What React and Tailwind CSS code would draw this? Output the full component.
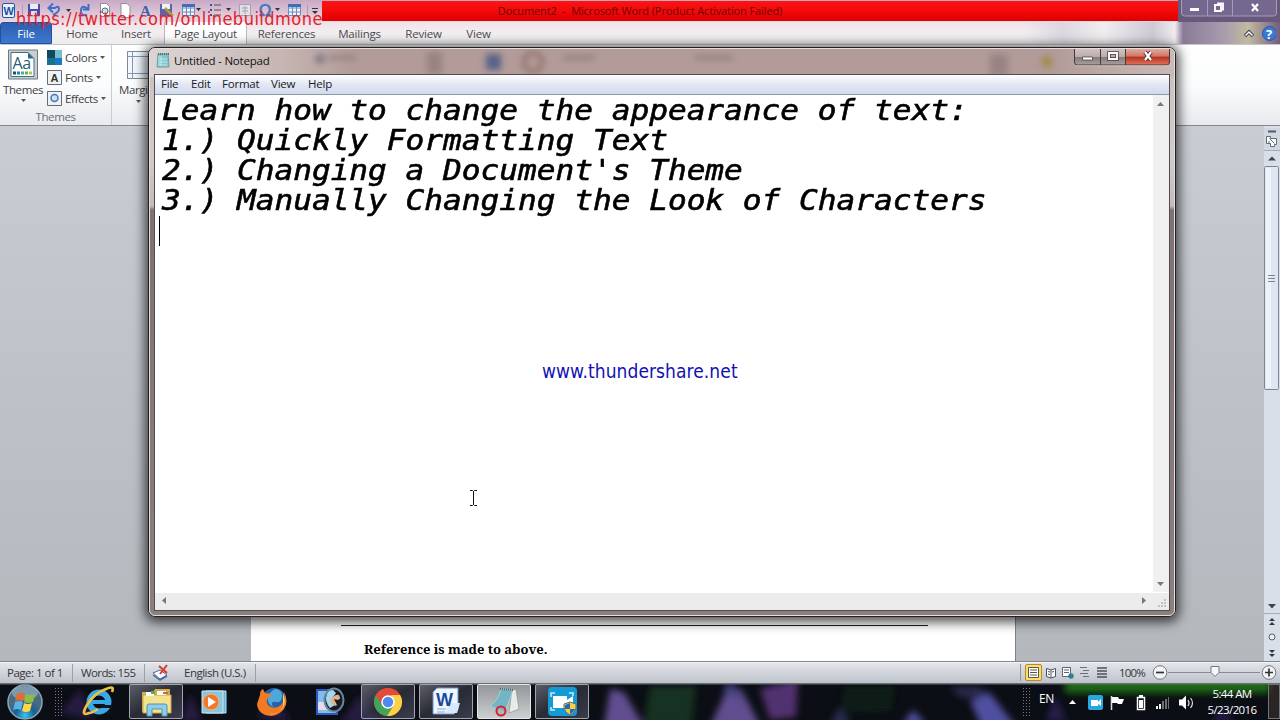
import React from "react";

const ui = "font-['Open_Sans','Noto_Sans',sans-serif]";

function Caret({ className = "" }) {
  return (
    <svg className={className} width="5" height="3" viewBox="0 0 5 3"><path d="M0 0h5L2.5 3z" fill="#555" /></svg>
  );
}

function QuickAccess() {
  return (
    <svg width="322" height="22" viewBox="0 0 322 22" className="shrink-0">
      <rect x="2.5" y="3.5" width="12" height="14" rx="1.5" fill="#eaf2fc" stroke="#1f56a8" />
      <text x="3.5" y="15" fontSize="11" fontWeight="700" fontFamily="Liberation Sans, sans-serif" fill="#1c4f9f">W</text>
      <path d="M22.5 5v12" stroke="#a79db4" />
      <path d="M28 4h12v12H28z" fill="#4d4cab" /><path d="M30 4h8v5h-8z" fill="#e9ecfb" /><path d="M31 11h6v5h-6z" fill="#dfe2f4" />
      <path d="M50 8h5q4-3 4 1 0 3-6 6M53 3.500l-4.500 4.500 4.500 4.500" fill="none" stroke="#3f6fc4" strokeWidth="2" />
      <path d="M66 9h5l-2.500 3z" fill="#333" />
      <path d="M88.500 4v5.500h-5.500M88 9q-6-5-7 1t6 5" fill="none" stroke="#3f6fc4" strokeWidth="2" />
      <path d="M100.500 3.500h6l3 3v10h-9z" fill="#fff" stroke="#8d8f9a" /><circle cx="105" cy="11" r="3" fill="#cddff3" stroke="#567" />
      <path d="M121 3.500h6l3 3v11h-9z" fill="#fff" stroke="#8d8f9a" />
      <text x="140" y="16" fontSize="15" fontWeight="700" fontFamily="Liberation Serif, serif" fill="#3a61ab">A</text>
      <path d="M160 4h12v12h-12z" fill="#5c63a8" /><path d="M162 4h8v5h-8z" fill="#f1f1fb" /><path d="m165 8 8 8" stroke="#b69a37" strokeWidth="2.500" />
      <path d="M182.500 4.500h12v11h-12zM182.500 8h12M182.500 12h12M186.500 4.500v11M190.500 4.500v11" fill="#edf3fb" stroke="#6b8ec2" /><path d="M182 4h13v3h-13z" fill="#426fb4" />
      <path d="M196 8h5l-2.500 3z" fill="#333" />
      <path d="M214 5h7M214 10h7M214 15h7" stroke="#555" strokeWidth="1.200" /><path d="M210 4h2v2h-2zM210 9h2v2h-2zM210 14h2v2h-2z" fill="#31509e" />
      <path d="M226 8h5l-2.500 3z" fill="#333" />
      <path d="M239.500 4.500h11v11h-11zM242 8h6M242 11h6M245 6v8" fill="#e2e0e8" stroke="#a5a1b0" />
      <text x="259" y="16" fontSize="16" fontFamily="DejaVu Sans, sans-serif" fill="#4774bc" stroke="#4774bc" strokeWidth=".6">Ω</text>
      <path d="M275 8h5l-2.500 3z" fill="#333" />
      <path d="M288.500 4.500h12v11h-12zM288.500 8h12M288.500 12h12M292.500 4.500v11M296.500 4.500v11" fill="#edf3fb" stroke="#6b8ec2" /><path d="M288 4h13v3h-13z" fill="#426fb4" />
      <path d="M307.500 5v12" stroke="#a79db4" /><path d="M312 8.500h6" stroke="#333" /><path d="M312 11h6l-3 3z" fill="#333" />
    </svg>
  );
}

function WordTitle() {
  return (
    <div className="flex h-[22px] bg-linear-to-b from-[#c9a9c6] to-[#ead9e2]">
      <QuickAccess />
      <div className={`mt-px flex h-[20px] w-[856px] items-center justify-center bg-linear-to-b from-[#ff1212] via-[#f30a0a] to-[#de0000] pr-[220px] text-[11px] tracking-[-0.11px] text-[#6b0505] ${ui}`}>
        <span className="whitespace-pre">Document2  -  Microsoft Word (Product Activation Failed)</span>
      </div>
      <div className="flex flex-1 justify-end bg-[#68587c] pr-[3px] pl-[3px]">
        <svg width="96" height="17" viewBox="0 0 96 17">
          <path d="M.5 0v13q0 3 3 3h89q3 0 3-3V0M26.500 0v16M51.500 0v16" fill="#746890" stroke="#a79bb5" />
          <path d="M9 8h9v3H9z" fill="#fff" />
          <path d="M34 5h6v6h-6zM37 5V3.500h5v6h-2" fill="none" stroke="#fff" strokeWidth="1.800" />
          <path d="m71 4 6 7m0-7-6 7" stroke="#fff" strokeWidth="2.200" />
        </svg>
      </div>
    </div>
  );
}

function Tab({ className, children }) {
  return <div className={`flex h-[22px] items-center justify-center pt-[2px] ${className}`}>{children}</div>;
}

function Tabs() {
  return (
    <div className={`flex h-[22px] items-stretch bg-linear-to-b from-[#efe2e9] via-[#f3eff1] to-[#ececee] text-[11.5px] tracking-[-0.2px] text-[#4b4b4f] ${ui}`}>
      <div className="flex w-[52px] items-center justify-center rounded-t-[3px] border border-[#244f99] bg-linear-to-b from-[#2e5eae] to-[#3c78cf] pt-[2px] text-[11.5px] text-white">File</div>
      <Tab className="w-[60px]">Home</Tab>
      <Tab className="w-[48px]">Insert</Tab>
      <Tab className="ml-1 w-[83px] border-x border-[#b9b9c0] bg-white">Page Layout</Tab>
      <Tab className="w-[79px]">References</Tab>
      <Tab className="w-[67px]">Mailings</Tab>
      <Tab className="w-[61px]">Review</Tab>
      <Tab className="w-[49px]">View</Tab>
      <div className="flex flex-1 items-center justify-end bg-[linear-gradient(90deg,transparent_0px,transparent_520px,#ddd7e0_560px,#f1edef_600px,#cfc9d5_650px,#f0ecee_672px,#8b7b97_680px,#a79bae_720px,#c2baa0_745px,#745d80_777px)] pr-1">
        <svg width="34" height="20" viewBox="0 0 34 20">
          <path d="m3 13 4-4 4 4" fill="none" stroke="#443e4e" strokeWidth="3.500" /><path d="m3.500 12.500 3.500-3.500 3.500 3.500" fill="none" stroke="#fff" strokeWidth="1.500" />
          <circle cx="27.500" cy="10.500" r="7" fill="#3979d3" stroke="#2858a5" /><text x="24" y="15.500" fontSize="13" fontWeight="700" fontFamily="Open Sans, sans-serif" fill="#fff">?</text>
        </svg>
      </div>
    </div>
  );
}

function ThemeRow({ icon, label }) {
  return (
    <div className="flex h-[20.500px] items-center">
      <svg width="15" height="15" viewBox="0 0 15 15">{icon}</svg>
      <span className="ml-[3px] tracking-[-0.4px]">{label}</span>
      <Caret className="ml-[3px]" />
    </div>
  );
}

function Ribbon() {
  return (
    <div className={`flex h-[82px] border-t border-b border-t-[#c5c6ca] border-b-[#85898f] bg-linear-to-b from-white via-[#fbfcfd] to-[#e7eaee] text-[11.500px] tracking-[-0.4px] text-[#3f4043] ${ui}`}>
      <div className="flex w-[112px] flex-col border-r border-[#c9ccd1]">
        <div className="flex h-[64px]">
          <div className="flex w-[46px] flex-col items-center pt-[4px]">
            <svg width="30" height="31" viewBox="0 0 30 30">
              <path d="M.5.500h29v29H.5z" fill="#c9ced5" stroke="#72777e" /><path d="M3 3h17l6 6v18H3z" fill="#fff" stroke="#3e7482" /><path d="M20 3v6h6z" fill="#2e6c86" />
              <text x="4.500" y="19.500" fontSize="16" fontFamily="Open Sans, sans-serif" fill="#275f73">Aa</text>
              <path d="M5 22h3v3H5z" fill="#1f506a" /><path d="M9 22h3v3H9z" fill="#19899c" /><path d="M13 22h3v3h-3z" fill="#30b6ae" /><path d="M17 22h3v3h-3z" fill="#6aad4d" /><path d="M21 22h3v3h-3z" fill="#a6ca60" />
            </svg>
            <span className="mt-[2px] leading-[15px]">Themes</span>
            <Caret className="mt-[2px]" />
          </div>
          <div className="flex flex-col pt-[2px] pl-px">
            <ThemeRow label="Colors" icon={<><path d="M0 0h8v8H0z" fill="#12475d" /><path d="M8 0h7v8H8z" fill="#74bfcf" /><path d="M0 8h8v7H0z" fill="#16728d" /><path d="M8 8h7v7H8z" fill="#1a79c4" /></>} />
            <ThemeRow label="Fonts" icon={<><path d="M.5.500h14v14H.5z" fill="#eef1f6" stroke="#666b77" /><text x="3.500" y="12" fontSize="11" fontWeight="700" fontFamily="Liberation Sans, sans-serif" fill="#333">A</text></>} />
            <ThemeRow label="Effects" icon={<><path d="M.5.500h14v14H.5z" fill="#eef1f6" stroke="#666b77" /><circle cx="7.500" cy="7" r="3.500" fill="#cbe1f5" stroke="#4579b5" strokeWidth="1.500" /></>} />
          </div>
        </div>
        <div className="text-center leading-[16px] tracking-[-0.4px] text-[#6b6d72]">Themes</div>
      </div>
      <div className="flex w-[60px] flex-col pt-[6px] pl-[7px]">
        <svg width="28" height="29" viewBox="0 0 28 29" className="ml-2"><path d="M.5.500h27v27H.5z" fill="#f4f8fc" stroke="#7d8796" /><path d="M5.500 0v28M0 5.500h28M0 22.500h28" stroke="#8198bc" /></svg>
        <span className="mt-[2px] leading-[15px]">Margins</span>
        <Caret className="mt-[3px] ml-[17px]" />
      </div>
    </div>
  );
}

function WordScroll() {
  return (
    <svg width="16" height="535" viewBox="0 0 16 535" className="shrink-0">
      <path d="M0 0h16v535H0z" fill="#d9dfe8" />
      <path d="M0 2h16v22H0z" fill="#d2d8e2" /><path d="M4 5.500h8" stroke="#555b65" strokeWidth="2" />
      <path d="M2.500 10.500h4v2h6v6h-2v2h-4v-3h-4zM5.500 12.500l5 5M5 15v2" fill="#fff" stroke="#646a75" />
      <path d="M0 24.500h16" stroke="#a4abb6" />
      <path d="m4 34.500 4-4 4 4z" fill="#3e434c" />
      <rect x=".5" y="40.500" width="14" height="223" rx="1" fill="#dfe6f1" stroke="#7c8696" /><path d="M2 42h5v220H2z" fill="#eff3f9" />
      <path d="M4 149.500h7M4 152.500h7M4 155.500h7" stroke="#7a8494" />
      <path d="m4 478 4 4.500 4-4.500z" fill="#3e434c" /><path d="M0 487.500h16" stroke="#a4abb6" />
      <path d="m5 495 3-3 3 3zm0 4 3-3 3 3z" fill="#30343b" /><circle cx="8" cy="511" r="3" fill="#eee" stroke="#5b616b" />
      <path d="m5 524 3 3 3-3zm0 4 3 3 3-3z" fill="#30343b" />
    </svg>
  );
}

function DocumentArea() {
  return (
    <div className="flex h-[536px] border-b border-[#808690] bg-linear-to-b from-[#c8ccd3] to-[#b4b8bd]">
      <div className="flex flex-1 items-end pl-[251px]">
        <div className="flex h-[436px] w-[765px] flex-col justify-end border-r border-[#7d828a] bg-white">
          <div className="ml-[90px] h-px w-[587px] bg-[#222]" />
          <div className="h-[35px] pt-[12px] pl-[113px] font-['Noto_Serif','DejaVu_Serif','Liberation_Serif',serif] text-[13px] leading-[22px] font-bold tracking-[-0.02px] text-black">Reference is made to above.</div>
        </div>
      </div>
      <WordScroll />
    </div>
  );
}

function StatusBar() {
  return (
    <div className={`flex h-[21px] items-center border-t border-[#f2f4f6] bg-linear-to-b from-[#e2e5e9] to-[#bec3cb] text-[11.500px] text-[#33363b] ${ui}`}>
      <div className="w-[73px] border-r border-[#9ba0a8] pl-[7px] leading-[18px] tracking-[-0.5px]">Page: 1 of 1</div>
      <div className="w-[72px] border-r border-[#9ba0a8] pl-[8px] leading-[18px] tracking-[-0.6px]">Words: 155</div>
      <svg width="38" height="20" viewBox="0 0 38 20"><path d="m8 10 7-3 7 5-7 4z" fill="#f8fbff" stroke="#4c6ca4" /><path d="m8 12 7 5 7-4" fill="none" stroke="#4c6ca4" strokeWidth="1.500" /><path d="m14 3 8 7m0-8-7 9" stroke="#d83a2c" strokeWidth="2" /></svg>
      <div className="w-[73px] border-r border-[#9ba0a8] pl-px leading-[18px] tracking-[-0.5px]">English (U.S.)</div>
      <div className="flex-1" />
      <svg width="92" height="20" viewBox="0 0 92 20">
        <path d="M.5 1v17" stroke="#8f949b" />
        <rect x="5.500" y="1.500" width="16" height="16" rx="1.500" fill="#fbdc6c" stroke="#b58a27" />
        <path d="M8.500 4.500h10v10h-10zM10 7h7M10 9.500h7M10 12h7" fill="#fff" stroke="#5c5744" />
        <path d="M26.500 5.500 31 7l4.500-1.500v8L31 15l-4.500-1.500zM31 7v8M28 8.500l2 .5M32 9l2-.5M28 11l2 .5" fill="#fff" stroke="#4b525d" />
        <path d="M42.500 4.500h8v9h-8zM44 7h5M44 9.500h5" fill="#fff" stroke="#5d6470" /><circle cx="51" cy="13" r="2.700" fill="#2e7f92" />
        <path d="M60 4.500h7M63 7.500h6M60 10.500h8M63 13.500h6" stroke="#6b7079" strokeWidth="1.200" />
        <path d="M77 5h10M77 8h10M77 11h10M77 14h10" stroke="#4d5159" strokeWidth="1.400" />
      </svg>
      <div className="w-[33px] text-right tracking-[-0.8px]">100%</div>
      <svg width="133" height="20" viewBox="0 0 133 20" className="ml-[2px]">
        <path d="M21 9.500h92" stroke="#878c94" />
        <circle cx="13" cy="9.500" r="6.800" fill="#f2f3f5" stroke="#73777e" /><path d="M9 9.500h8" stroke="#333" strokeWidth="1.700" />
        <path d="M64 3.500h8v6l-4 4-4-4z" fill="#f7f7f9" stroke="#73777e" />
        <circle cx="122" cy="9.500" r="6.800" fill="#f2f3f5" stroke="#73777e" /><path d="M118 9.500h8m-4-4v8" stroke="#333" strokeWidth="1.700" />
      </svg>
    </div>
  );
}

function Wallpaper() {
  return (
    <svg className="absolute inset-0" width="1280" height="37" viewBox="0 0 1280 37" preserveAspectRatio="none">
      <defs><filter id="soft" x="-20%" y="-50%" width="140%" height="200%"><feGaussianBlur stdDeviation="3.500" /></filter></defs>
      <path d="M0 0h1280v37H0z" fill="#0b0e14" />
      <g filter="url(#soft)">
        <path d="M60 30 80 6l15 31zM180 40l10-30 12 28zM258 35l10-26 24 30zM340 40l20-28 20 30z" fill="#251a43" />
        <path d="M644 42 650 3h46l-4 39z" fill="#163220" /><path d="M840 30 845 3h50l-4 25z" fill="#101f16" />
        <path d="m604 44 6-38 14 3 20 35zM710 44l17-38h14l20 38z" fill="#604d90" /><path d="m760 6 38-10-2 38-26 3z" fill="#51306f" /><path d="m722 6 10-8 10 20z" fill="#40407e" />
        <path d="m828 44 12-20 12 20zM950 4h30l12 10h-32z" fill="#2c2a50" /><path d="m902 42 11-15 14 15zM970 18l20-8 26 34h-34z" fill="#504fa0" />
        <path d="M1065 -8h205v18h-205z" fill="#1d6a14" /><path d="m1045 38 10-25 12 25zM1210 38l14-12 10 13z" fill="#281d4c" />
      </g>
      <path d="M0 0h1280v1.500H0z" fill="#686e72" />
    </svg>
  );
}

function TaskButton({ active, glow, children }) {
  return (
    <div className={`flex h-[35px] w-[54px] items-start justify-center rounded-[2px] border ${active ? (glow ? "border-[#e5e7e8] bg-linear-to-b from-[#929799] to-[#cccfd0]" : "border-[#a0a5b0] bg-linear-to-br from-[#848592aa] via-[#45465480] to-[#78799a70]") : "border-transparent"}`}>
      <svg width="36" height="32" viewBox="0 0 36 32">{children}</svg>
    </div>
  );
}

function Dots({ className }) {
  return <div className={`relative h-[30px] w-[8px] bg-[radial-gradient(circle,#777_0.5px,transparent_0.9px)] bg-size-[3px_3px] ${className}`} />;
}

function Taskbar() {
  return (
    <div className="relative flex h-[37px] overflow-hidden">
      <Wallpaper />
      <svg className="relative ml-[6px]" width="38" height="37" viewBox="0 0 38 37">
        <defs><radialGradient id="orb" cx="50%" cy="90%"><stop stopColor="#37c9ed" /><stop offset=".55" stopColor="#1b6095" /><stop offset="1" stopColor="#486a83" /></radialGradient></defs>
        <circle cx="19" cy="19" r="17" fill="url(#orb)" stroke="#89a6b5" strokeWidth="1.500" /><ellipse cx="19" cy="10" rx="13" ry="7" fill="#bbd2de" opacity=".45" />
        <path d="M11 11q4-2 8-.5l-2 8q-4-2-8-.5z" fill="#e66b32" /><path d="M20 11q4 2 9 0l-2 8q-5 2-9 0z" fill="#8dbf3d" /><path d="M9 19q4-2 8 0l-2 8q-4-2-8 0z" fill="#5cb2e5" /><path d="M18 20q4 2 8 0l-2 8q-4 2-8 0z" fill="#ffd64a" />
      </svg>
      <Dots className="mt-[4px] ml-[10px]" />
      <div className="relative ml-[9px] flex gap-[4px] pt-[1px]">
        <TaskButton>
          <circle cx="19" cy="17" r="9.500" fill="none" stroke="#37a9ea" strokeWidth="6" /><path d="M12 15h19v4H12z" fill="#37a9ea" /><path d="M21 20h12l-1 3H21z" fill="#101522" />
          <path d="M32 7q3-7-6-3Q14 8 7 20T9 28q3 0 9-4" fill="none" stroke="#edc13e" strokeWidth="2.700" />
        </TaskButton>
        <TaskButton active>
          <path d="M4 7h11l2-3h15v23H4z" fill="#cfad4f" /><path d="M5 10h28v18H5z" fill="#f4e28d" stroke="#c8a74a" /><path d="M8 7h8v4H8zM19 6h9v4h-9z" fill="#f8fafb" /><path d="M13 6h4v3h-4z" fill="#5cac53" /><path d="M25 7h5v2h-5z" fill="#ce624b" />
          <path d="M9 31V21q0-2 2-2h16q2 0 2 2v10h-5v-7H14v7z" fill="#8fcde9" stroke="#4894bd" />
        </TaskButton>
        <TaskButton>
          <path d="M10 6h20v22H10z" fill="#6ab4d8" stroke="#b9e2f3" /><path d="M6 6h21v22H6z" fill="#88c5df" stroke="#cee9f3" /><circle cx="15" cy="17" r="8" fill="#ed792e" stroke="#f9b47a" /><path d="m12 12 8 5-8 5z" fill="#fff" />
        </TaskButton>
        <TaskButton>
          <circle cx="20" cy="15" r="12" fill="#2860ab" /><path d="M21 4q7 0 7 7t-6 6-3 5q-6-3-5-9t7-9z" fill="#4ca8dd" />
          <path d="M6 10q0-5 3-6l2 4 7 1-4 4q-3 4 1 8 6 4 12-1 5-5 3-13 5 9 0 17-6 7-13 7-13-1-14-12z" fill="#f07b22" /><path d="M29 8q4 9-1 16-6 6-13 5 11 0 14-8z" fill="#ffd354" />
        </TaskButton>
        <TaskButton>
          <path d="M5 5h20v24H5z" fill="#82bce8" stroke="#3156bd" strokeWidth="2" /><path d="M6 17h12l5 8H6z" fill="#e5dbea" /><ellipse cx="22" cy="15" rx="9.500" ry="11.500" fill="#151c28" stroke="#69889d" strokeWidth="2" /><path d="M15 9q-3 7 3 14l5-3-4-5 5-7-3-3q-4 0-6 4z" fill="#a4d7ed" /><path d="M18 15q5-6 9-5l2 5-5 6q-4-1-6-6z" fill="#e2b18d" /><path d="m22 14 4 1 4-3-1 7-4 1z" fill="#1c1a22" />
        </TaskButton>
        <TaskButton active>
          <circle cx="18" cy="17" r="14" fill="#e24a3a" /><path d="M5.900 10A14 14 0 0 0 17 31l7-11-6-3z" fill="#42a35a" /><path d="M30.100 10A14 14 0 0 1 17 31l7-11-3-10z" fill="#fbd147" /><path d="M5.900 10 12 20l6-10h12A14 14 0 0 0 5.900 10z" fill="#e24a3a" /><circle cx="18" cy="17" r="6" fill="#4f8af0" stroke="#fff" strokeWidth="1.500" />
        </TaskButton>
        <TaskButton active>
          <path d="M9 3h21v22l-4 4H5V7z" fill="#f0f6fe" stroke="#6c92c8" /><path d="M21 18h11l-3 10H18z" fill="#d9e8fb" />
          <text x="8" y="21" fontSize="18" fontWeight="700" fontFamily="Liberation Sans, sans-serif" fill="#174c9d">W</text><path d="M9 24h9M9 27h8" stroke="#86a8d5" />
        </TaskButton>
        <TaskButton active glow>
          <path d="m26 4 4 1 3 19-10 4z" fill="#e9ece6" stroke="#8d968f" strokeWidth=".7" /><path d="m15 4 12 1-8 22L4 21q8-5 11-17z" fill="#72b6c5" stroke="#a6ced5" /><path d="m14 4 13 1" stroke="#59666a" strokeWidth="2" strokeDasharray="1 1" /><circle cx="15" cy="26" r="4.500" fill="#9ba8ae" fillOpacity=".5" stroke="#d8202b" strokeWidth="2" />
        </TaskButton>
        <TaskButton active>
          <rect x="4" y="2" width="29" height="29" rx="4" fill="#139bd6" /><path d="M9 11h14v12H9zM23 15l6-4v12l-6-4z" fill="#fff" /><path d="M7 12V8h4M7 22v3h4M25 8h4v3" fill="none" stroke="#ccecff" strokeWidth="1.500" />
          <path d="m26 17 6 2v4q-1 5-6 7-5-2-6-7v-4z" fill="#f2cf4c" stroke="#596b76" /><path d="M26 18v6h-5v-4zM26 24h5q-1 3-5 5z" fill="#2969ad" />
        </TaskButton>
      </div>
      <div className="flex-1" />
      <Dots className="mt-[4px] mr-[6px]" />
      <div className={`relative mt-[6px] w-[31px] pl-[3px] text-[12px] leading-[20px] tracking-[-0.4px] text-white ${ui}`}>EN</div>
      <svg className="relative" width="130" height="36" viewBox="0 0 130 36">
        <path d="m2 21 3.500-4 3.500 4z" fill="#fff" />
        <rect x="21" y="12" width="15" height="15" rx="2" fill="#28a8df" /><path d="M24 17h7v6h-7zM30 20l4-4v7z" fill="#fff" />
        <path d="M44.500 13v14" stroke="#ddd" strokeWidth="1.500" /><path d="M45 14h6l1 2h5l-2 5h-4l-1-1h-5z" fill="#fff" />
        <path d="M70.500 14.500h7v12h-7z" fill="none" stroke="#fff" strokeWidth="1.500" /><path d="M72 12h4v2h-4zM72 17h4v8h-4z" fill="#fff" />
        <path d="M89 23h2v3h-2zM92 21h2v5h-2z" fill="#eee" /><path d="M95 18h2v8h-2zM98 16h2v10h-2zM101 14h1v12h-1z" fill="#6c706d" />
        <path d="M112 16.500h3l4-4v14l-4-4h-3z" fill="#fff" /><path d="M121 17q2 3 0 6M123.500 15q4 5 0 10" fill="none" stroke="#ddd" strokeWidth="1.200" />
      </svg>
      <div className={`relative mr-[7px] ml-[6px] w-[58px] pt-[3px] text-center text-[11.500px] leading-[15.500px] tracking-[-0.6px] text-white ${ui}`}><div>5:44 AM</div><div>5/23/2016</div></div>
      <div className="relative mt-px h-[35px] w-[12px] border border-[#707674] bg-[#3e322ea0]" />
    </div>
  );
}

function NotepadTitle() {
  return (
    <div className="relative flex h-[28px] items-start overflow-hidden rounded-t-[5px]">
      <svg className="absolute inset-0" width="1024" height="28" viewBox="0 0 1024 28">
        <defs><filter id="glass"><feGaussianBlur stdDeviation="3" /></filter><linearGradient id="g"><stop stopColor="#dcd5d5" /><stop offset=".13" stopColor="#c6b5b2" /><stop offset=".2" stopColor="#b29b98" /><stop offset=".88" stopColor="#b29b98" /><stop offset="1" stopColor="#c9bab7" /></linearGradient></defs>
        <path d="M0 0h1024v28H0z" fill="url(#g)" />
        <g filter="url(#glass)" fill="#907b7b">
          <circle cx="170" cy="10" r="5" fill="#7c7a88" /><path d="M178 6h28v5h-28zM413 6h32v5h-32zM545 6h38v5h-38zM277 3h15v22h-15zM840 5h18v22h-18z" opacity=".75" /><path d="M336 5h15v16h-15z" fill="#586286" /><circle cx="383" cy="13" r="9" fill="#b39a96" stroke="#8e6e69" strokeWidth="4" /><circle cx="897" cy="13" r="6" fill="#a38b50" />
        </g>
      </svg>
      <svg className="relative mt-[3px] ml-[6px]" width="14" height="17" viewBox="0 0 14 17"><path d="M2 2h10l1 13H1z" fill="#7fc8ce" stroke="#80949b" /><path d="M3 4v10M5 4v10M4 7h7M4 10h7M4 13h7" stroke="#c1e9eb" /><path d="M2 2h11" stroke="#596b74" strokeWidth="2" strokeDasharray="1 1" /></svg>
      <div className={`relative mt-[3px] ml-[4px] text-[11.500px] leading-[18px] tracking-[-0.2px] text-[#111] ${ui}`}>Untitled - Notepad</div>
      <div className="flex-1" />
      <svg className="relative mr-[4px]" width="96" height="19" viewBox="0 0 96 19">
        <defs><linearGradient id="cb" x2="0" y2="1"><stop stopColor="#d2c3c0" /><stop offset=".48" stopColor="#bcaba9" /><stop offset=".5" stopColor="#85797a" /><stop offset="1" stopColor="#aaa09f" /></linearGradient><linearGradient id="cr" x2="0" y2="1"><stop stopColor="#dfaaa0" /><stop offset=".45" stopColor="#cf7666" /><stop offset=".5" stopColor="#b93220" /><stop offset="1" stopColor="#e0765c" /></linearGradient></defs>
        <path d="M.5 0v13q0 3 3 3h48V0z" fill="url(#cb)" /><path d="M51.500 0v16h41q3 0 3-3V0z" fill="url(#cr)" />
        <path d="M.5 0v13q0 3 3 3h89q3 0 3-3V0M26.500 0v16M51.500 0v16" fill="none" stroke="#453a3b" /><path d="M2 16.800h92" stroke="#e6dad8" strokeWidth=".7" />
        <path d="M8.500 8h10v3h-10z" fill="#fff" stroke="#494246" strokeWidth=".8" /><path d="M35 4h8v6h-8z" fill="none" stroke="#443e43" strokeWidth="3.500" /><path d="M35 4h8v6h-8z" fill="none" stroke="#fff" strokeWidth="1.900" />
        <path d="m71 3 6 8m0-8-6 8" stroke="#5b2b2a" strokeWidth="4" /><path d="m71 3 6 8m0-8-6 8" stroke="#fff" strokeWidth="2.200" />
      </svg>
    </div>
  );
}

function Notepad() {
  const lines = [
    "Learn how to change the appearance of text:",
    "1.) Quickly Formatting Text",
    "2.) Changing a Document's Theme",
    "3.) Manually Changing the Look of Characters",
  ];
  return (
    <div className="absolute top-[47px] left-[148px] flex h-[570px] w-[1028px] flex-col rounded-[7px] border border-[#242020] bg-[linear-gradient(180deg,#c9bfbd_0px,#d3cbc9_110px,#c4bbb9_158px,#7f7371_162px,#8c807e_100%)] shadow-[0_2px_12px_3px_rgba(0,0,0,0.7)]">
      <div className="flex min-h-0 flex-1 flex-col rounded-[6px] border border-[#e5dddd] px-[4px] pb-[4px]">
        <div className="-mx-[4px]"><NotepadTitle /></div>
        <div className="relative mt-[-3px] flex min-h-0 flex-1 flex-col border border-[#504c55] bg-white">
          <div className={`flex h-[20px] shrink-0 items-center border-b border-[#8a9cad] bg-linear-to-b from-white via-[#e2e7f4] to-[#d3daed] pb-[2px] text-[11.500px] tracking-[-0.22px] text-[#1a1a24] ${ui}`}>
            <span className="w-[30px] pl-[6px]">File</span><span className="w-[31px] pl-[6px]">Edit</span><span className="w-[50px] pl-[6px]">Format</span><span className="w-[36px] pl-[5px]">View</span><span className="pl-[6px]">Help</span>
          </div>
          <div className="flex min-h-0 flex-1">
            <div className="flex-1 pt-px pl-[7px]">
              <div className="w-[850px] origin-left scale-x-[1.1115] font-['DejaVu_Sans_Mono',monospace] text-[28px] leading-[30px] text-black italic [-webkit-text-stroke:0.6px_black]">
                {lines.map((l) => <div key={l} className="whitespace-pre">{l}</div>)}
              </div>
              <div className="ml-[-3px] h-[30px] w-px bg-black" />
            </div>
            <svg width="16" height="497" viewBox="0 0 16 497"><path d="M0 0h16v497H0z" fill="#f0f0f0" /><path d="m4 11 3.500-4 3.500 4z" fill="#777" /><path d="m4 487 3.500 4 3.500-4z" fill="#777" /></svg>
          </div>
          <div className="flex h-[17px] shrink-0 justify-between bg-[#ececec]">
            <svg width="16" height="16" viewBox="0 0 16 16"><path d="m11 4-4 3.500 4 3.500z" fill="#777" /></svg>
            <svg width="32" height="16" viewBox="0 0 32 16"><path d="m5 4 4 3.500-4 3.500z" fill="#777" /><path d="M27 6h2v2h-2zM24 9h2v2h-2zM27 9h2v2h-2zM21 12h2v2h-2zM24 12h2v2h-2zM27 12h2v2h-2z" fill="#c1c1c1" /></svg>
          </div>
        </div>
      </div>
    </div>
  );
}

export default function App() {
  return (
    <div className="relative flex h-[720px] w-[1280px] flex-col overflow-hidden">
      <WordTitle />
      <Tabs />
      <Ribbon />
      <DocumentArea />
      <StatusBar />
      <Notepad />
      <Taskbar />
      <div className="absolute top-[7px] left-[16px] font-['DejaVu_Sans_Condensed','DejaVu_Sans',sans-serif] text-[18px] leading-[24px] font-normal tracking-[0.48px] whitespace-nowrap text-[#e3202c] [font-stretch:condensed]">https://twitter.com/onlinebuildmone</div>
      <div className="absolute top-[358px] left-[542px] font-['DejaVu_Sans_Condensed','DejaVu_Sans',sans-serif] text-[19px] leading-[26px] tracking-[0.08px] whitespace-nowrap text-[#1111b4] [font-stretch:condensed]">www.thundershare.net</div>
      <svg className="absolute top-[490px] left-[469px]" width="9" height="16" viewBox="0 0 9 16"><path d="M1 .5h2.500l1 1 1-1H8M4.500 1v14M1 15.500h2.500l1-1 1 1H8" fill="none" stroke="#111" /></svg>
    </div>
  );
}
